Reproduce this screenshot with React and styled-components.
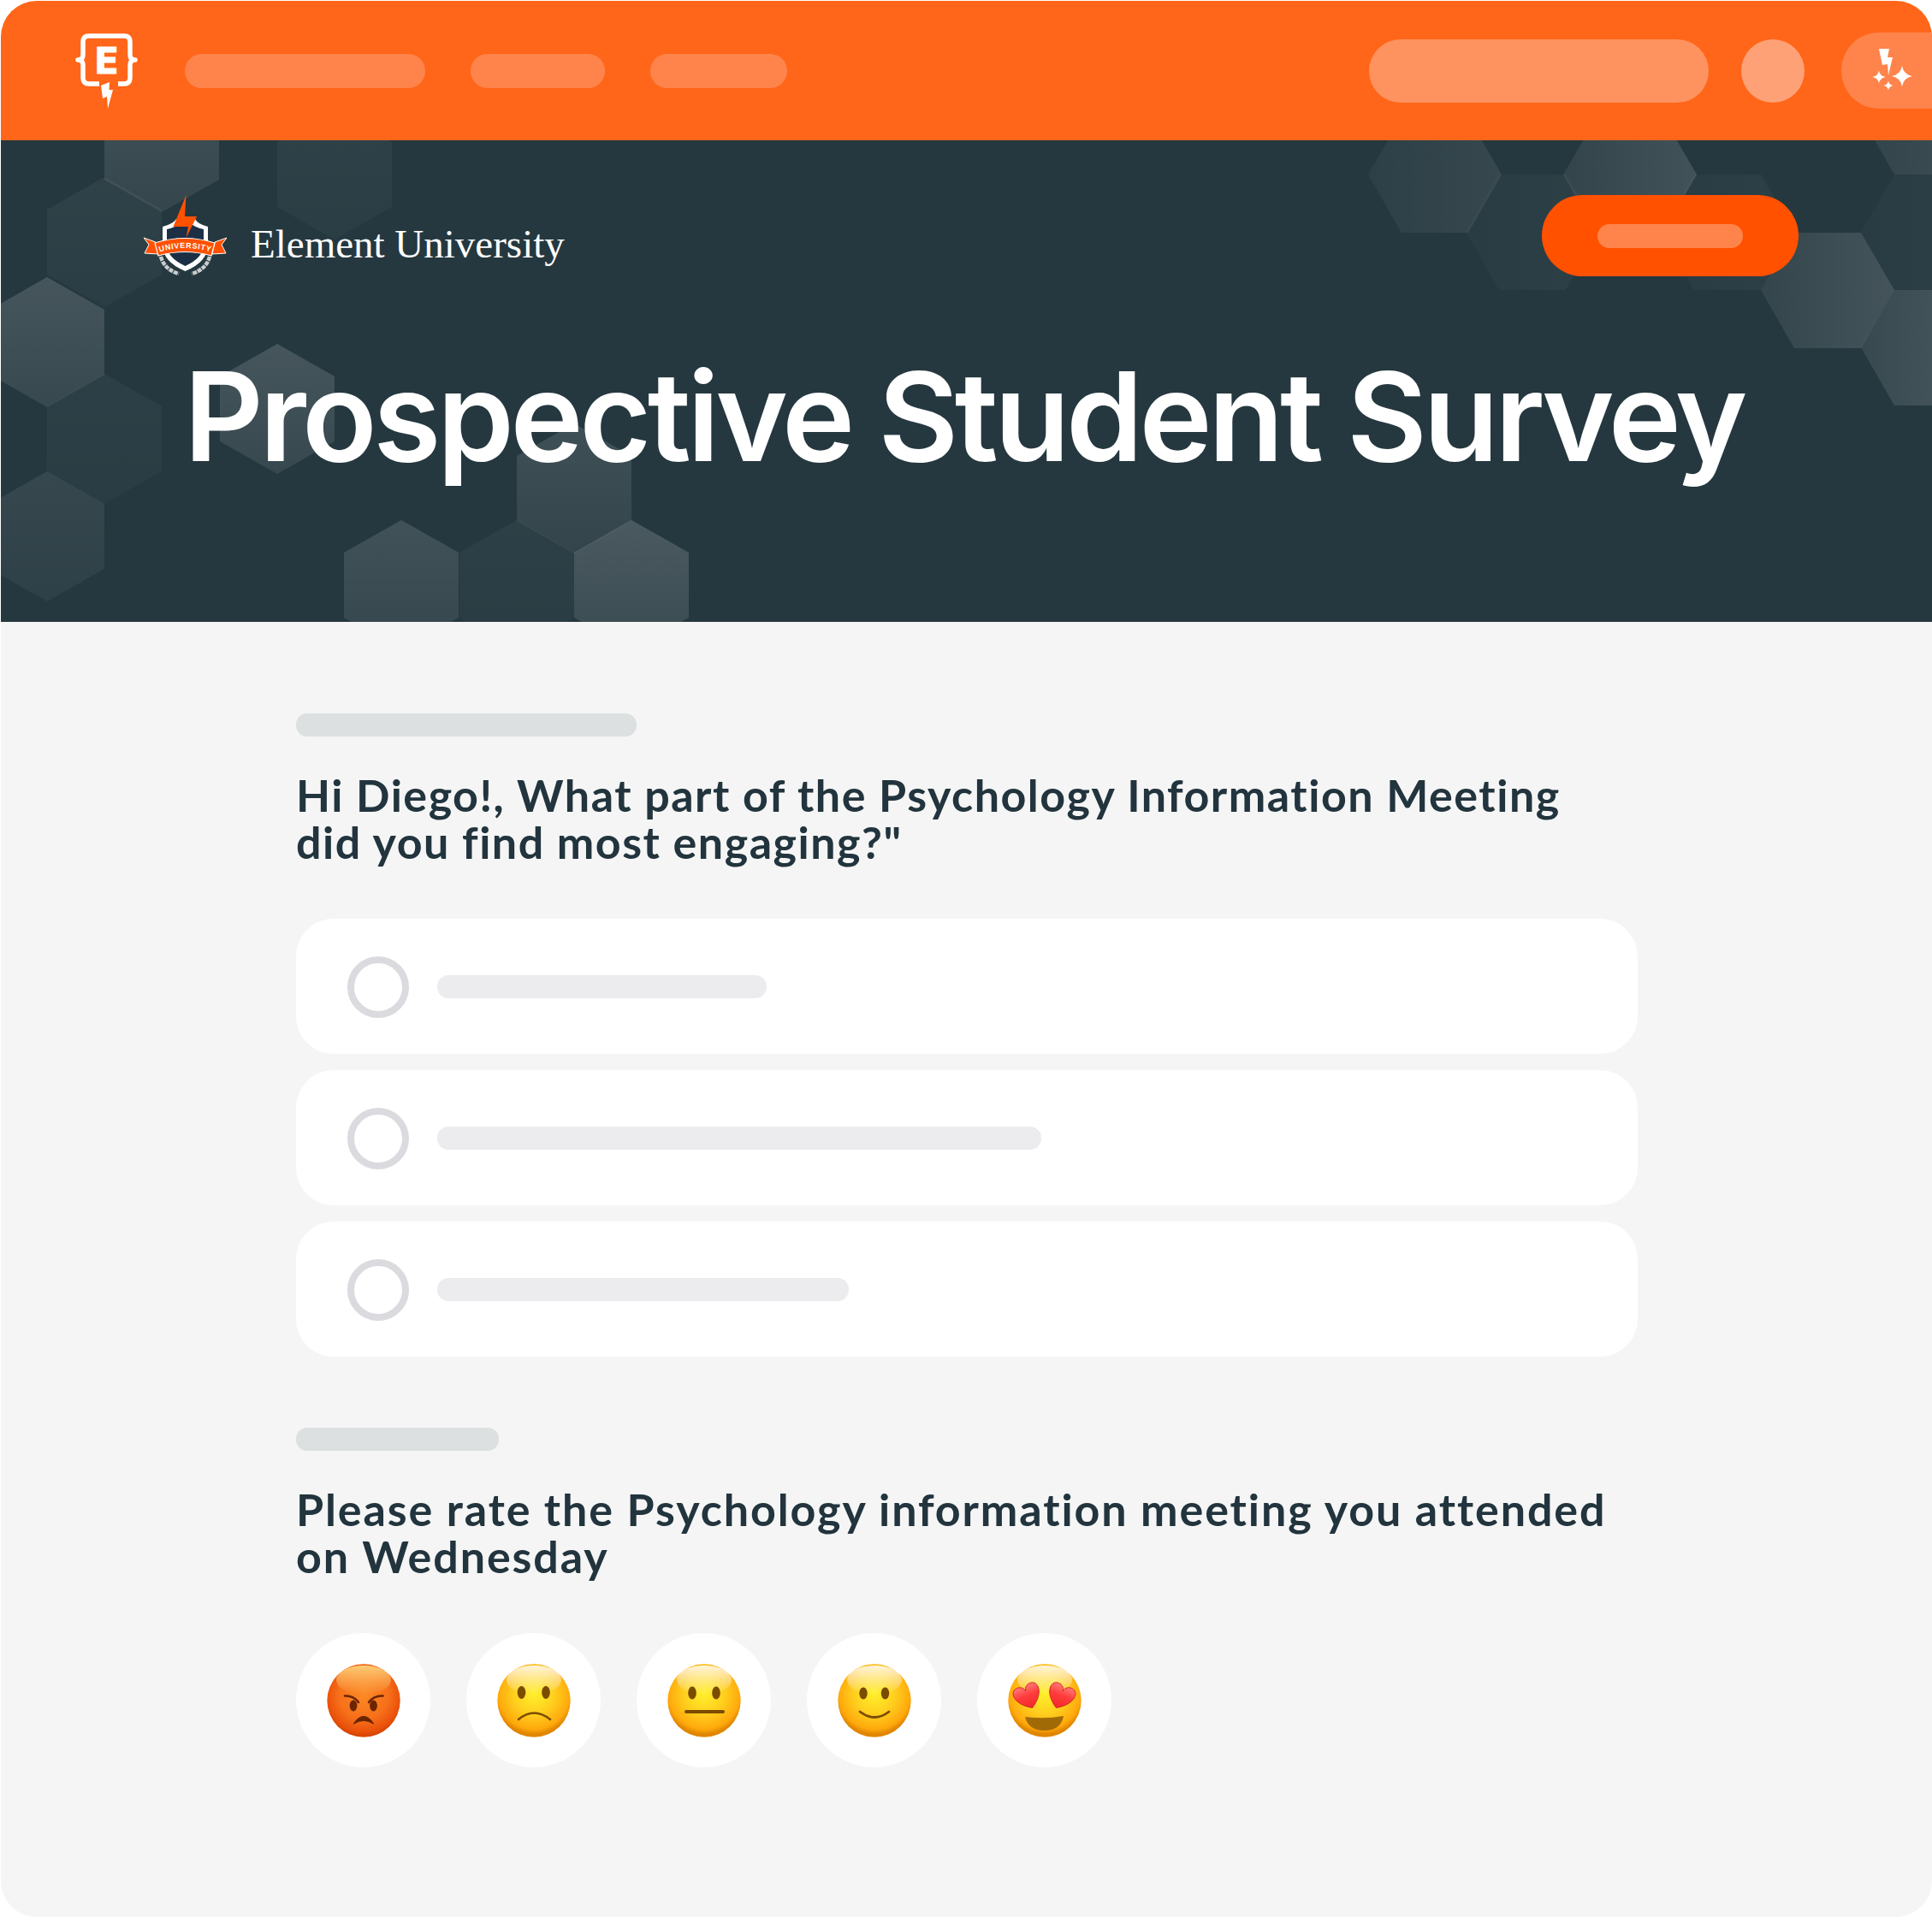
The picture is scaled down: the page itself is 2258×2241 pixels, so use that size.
import styled, { createGlobalStyle } from 'styled-components';

const GlobalStyle = createGlobalStyle`
    html, body {
        margin: 0;
        padding: 0;
        background: #ffffff;
    }
    body {
        font-family: 'Inter', 'Liberation Sans', sans-serif;
    }
`;

const Frame = styled.div`
    width: 2257px;
    height: 2240px;
    margin: 1px 0 0 1px;
    border-radius: 42px;
    overflow: hidden;
    background: #f5f5f5;
`;

const TopBar = styled.header`
    display: flex;
    align-items: center;
    height: 163px;
    padding-left: 87px;
    background: #ff6619;
`;

const TopLeft = styled.div`
    display: flex;
    align-items: center;
    gap: 53px;
    margin-left: 55px;
`;

const TopRight = styled.div`
    display: flex;
    align-items: center;
    margin-left: auto;
`;

const NavPill = styled.div`
    width: ${(p) => p.$w}px;
    height: 40px;
    border-radius: 20px;
    background: #ff844c;
`;

const SearchPill = styled.div`
    width: 397px;
    height: 74px;
    border-radius: 37px;
    background: #ff935f;
`;

const Avatar = styled.div`
    width: 74px;
    height: 74px;
    margin-left: 38px;
    border-radius: 50%;
    background: #ffa177;
`;

const AssistPill = styled.div`
    display: flex;
    align-items: center;
    width: 106px;
    height: 89px;
    margin-left: 43px;
    padding-left: 36px;
    box-sizing: border-box;
    border-radius: 44px 0 0 44px;
    background: #ff844c;
`;

const Hero = styled.section`
    position: relative;
    height: 563px;
    overflow: hidden;
    background: #25383f;
`;

const HexLayer = styled.svg`
    position: absolute;
    inset: 0;
    width: 100%;
    height: 100%;
`;

const HeroRow = styled.div`
    position: relative;
    display: flex;
    justify-content: space-between;
    padding: 64px 156px 0 167px;
`;

const Brand = styled.div`
    display: flex;
    align-items: center;
    gap: 28px;
    height: 94px;
`;

const BrandName = styled.span`
    font-family: 'Liberation Serif', 'Times New Roman', serif;
    font-size: 47px;
    color: #ffffff;
    padding-top: 20px;
`;

const HeroButton = styled.div`
    display: flex;
    align-items: center;
    justify-content: center;
    width: 300px;
    height: 95px;
    border-radius: 48px;
    background: #ff5100;
`;

const HeroButtonLabel = styled.div`
    width: 170px;
    height: 28px;
    border-radius: 14px;
    background: #ff844c;
`;

const HeroTitle = styled.h1`
    position: relative;
    margin: 92px 0 0 214px;
    font-size: 144px;
    line-height: 144px;
    font-weight: 600;
    letter-spacing: -4.4px;
    color: #ffffff;
    white-space: nowrap;
`;

const Content = styled.main`
    padding: 107px 0 0 345px;
    width: 1568px;
`;

const SkeletonLabel = styled.div`
    width: ${(p) => p.$w}px;
    height: 27px;
    border-radius: 13px;
    background: #dde0e0;
`;

const Question = styled.h2`
    margin: 41px 0 62px;
    font-family: 'Lato', 'Open Sans', sans-serif;
    font-size: 52px;
    line-height: 55px;
    font-weight: 700;
    letter-spacing: ${(p) => p.$spacing}px;
    color: #22343d;
    white-space: nowrap;
`;

const Options = styled.div`
    display: flex;
    flex-direction: column;
    gap: 19px;
    margin-bottom: 83px;
`;

const OptionCard = styled.div`
    display: flex;
    align-items: center;
    gap: 33px;
    height: 158px;
    padding-left: 60px;
    border-radius: 44px;
    background: #ffffff;
`;

const Radio = styled.div`
    width: 72px;
    height: 72px;
    margin-top: 2px;
    box-sizing: border-box;
    border: 8px solid #dadadf;
    border-radius: 50%;
`;

const OptionBar = styled.div`
    width: ${(p) => p.$w}px;
    height: 27px;
    border-radius: 13px;
    background: #ececee;
`;

const Ratings = styled.div`
    display: flex;
    gap: 42px;
`;

const RatingButton = styled.div`
    display: flex;
    align-items: center;
    justify-content: center;
    width: 157px;
    height: 157px;
    border-radius: 50%;
    background: #ffffff;
`;

const hexLeft = [
    { cx: 189, top: 96, a: 0.13 },
    { cx: 391, top: 128, a: 0.05 },
    { cx: 122, top: 207, a: 0.05 },
    { cx: 55, top: 324, a: 0.15 },
    { cx: 122, top: 437, a: 0.04 },
    { cx: 55, top: 551, a: 0.08 },
    { cx: 324, top: 402, a: 0.15 },
    { cx: 671, top: 495, a: 0.12 },
    { cx: 469, top: 608, a: 0.13 },
    { cx: 604, top: 608, a: 0.04 },
    { cx: 738, top: 608, a: 0.17 },
];

const hexRight = [
    { cx: 1677, cy: 204, a: 0.08 },
    { cx: 1791, cy: 271, a: 0.04 },
    { cx: 1905, cy: 204, a: 0.13 },
    { cx: 2019, cy: 271, a: 0.04 },
    { cx: 2136, cy: 339, a: 0.14 },
    { cx: 2253, cy: 136, a: 0.12 },
    { cx: 2253, cy: 271, a: 0.04 },
    { cx: 2253, cy: 406, a: 0.17 },
];

// pointy top, 134 wide and 152 tall
const pointyHex = (cx, top) =>
    [
        [cx, top],
        [cx + 67, top + 38],
        [cx + 67, top + 114],
        [cx, top + 152],
        [cx - 67, top + 114],
        [cx - 67, top + 38],
    ].join(' ');

// flat top, 156 wide and 135 tall
const flatHex = (cx, cy) =>
    [
        [cx - 78, cy],
        [cx - 39, cy - 67],
        [cx + 39, cy - 67],
        [cx + 78, cy],
        [cx + 39, cy + 68],
        [cx - 39, cy + 68],
    ].join(' ');

function HexBackground() {
    return (
        <HexLayer viewBox="1 164 2257 563" preserveAspectRatio="none">
            <defs>
                <linearGradient id="hexDown" x1="0" y1="0" x2="0" y2="1">
                    <stop offset="0" stopColor="#fff" stopOpacity="1" />
                    <stop offset="1" stopColor="#fff" stopOpacity="0.55" />
                </linearGradient>
                <linearGradient id="hexAcross" x1="0" y1="0" x2="1" y2="0">
                    <stop offset="0" stopColor="#fff" stopOpacity="0.5" />
                    <stop offset="1" stopColor="#fff" stopOpacity="1" />
                </linearGradient>
            </defs>
            {hexLeft.map((h) => (
                <polygon key={`${h.cx}-${h.top}`} points={pointyHex(h.cx, h.top)} fill="url(#hexDown)" opacity={h.a} />
            ))}
            {hexRight.map((h) => (
                <polygon key={`${h.cx}-${h.cy}`} points={flatHex(h.cx, h.cy)} fill="url(#hexAcross)" opacity={h.a} />
            ))}
        </HexLayer>
    );
}

function ElementLogo() {
    return (
        <svg width="73" height="89" viewBox="0 0 73 89">
            <path
                d="M28 60H16Q9 60 9 53V38Q9 32 3 32Q9 32 9 26V11Q9 4 16 4H57Q64 4 64 11V26Q64 32 70 32Q64 32 64 38V53Q64 60 57 60H50"
                fill="none"
                stroke="#fff"
                strokeWidth="5.5"
                strokeLinejoin="round"
            />
            <polygon points="30,62 40,58 39.5,67 44,67 38,89 37,75 32,77" fill="#fff" />
            <text
                x="36.5"
                y="47.5"
                textAnchor="middle"
                fontFamily="Inter"
                fontWeight="800"
                fontSize="43"
                fill="#fff"
                stroke="#fff"
                strokeWidth="1"
            >
                E
            </text>
        </svg>
    );
}

const star = (cx, cy, r) =>
    `M${cx} ${cy - r}Q${cx + r * 0.15} ${cy - r * 0.15} ${cx + r} ${cy}Q${cx + r * 0.15} ${cy + r * 0.15} ${cx} ${cy + r}Q${cx - r * 0.15} ${cy + r * 0.15} ${cx - r} ${cy}Q${cx - r * 0.15} ${cy - r * 0.15} ${cx} ${cy - r}Z`;

function AssistIcon() {
    return (
        <svg width="50" height="52" viewBox="0 0 50 52">
            <polygon points="8,0 20,0 18,10 24,10 19,31 18,18 12,19" fill="#fff" />
            <path d={star(35, 32, 12)} fill="#fff" />
            <path d={star(8, 33, 7.5)} fill="#fff" />
            <path d={star(19, 43, 5.5)} fill="#fff" />
        </svg>
    );
}

function UniversityCrest() {
    return (
        <svg width="97" height="94" viewBox="0 0 97 94">
            <defs>
                <path id="ribbonArc" d="M17 67Q48 57 80 67" fill="none" />
            </defs>
            <g fill="none" stroke="#c9cdcf" strokeWidth="4.5" strokeDasharray="5 1">
                <path d="M20 72Q24 87 41 92" />
                <path d="M77 72Q73 87 56 92" />
            </g>
            <path d="M22 37Q34 34 38 28H60Q63 34 75 37V58Q75 78 48.5 89Q22 78 22 58Z" fill="#fff" />
            <path d="M27 40Q36 38 41 34H56Q61 38 70 40V58Q70 73 48.5 83Q27 73 27 58Z" fill="#1c2f45" />
            <polygon points="49.5,0 48,25 62,25 49.5,50 52,37 34.5,37" fill="#ff5100" />
            <polygon points="0,50 14,55 17,69 1,68 6,58" fill="#ff5100" stroke="#fff" strokeWidth="1" />
            <polygon points="97,50 83,55 80,69 96,68 91,58" fill="#ff5100" stroke="#fff" strokeWidth="1" />
            <path d="M13 56Q48 45 83 56L79 71Q48 62 17 71Z" fill="#ff5100" stroke="#fff" strokeWidth="1.2" />
            <text fontFamily="Liberation Sans" fontWeight="700" fontSize="9" fill="#fff" letterSpacing="0.7">
                <textPath href="#ribbonArc" startOffset="50%" textAnchor="middle">
                    UNIVERSITY
                </textPath>
            </text>
        </svg>
    );
}

function Emoji({ kind }) {
    const angry = kind === 'angry';
    const ink = angry ? '#6b2500' : '#7a4c00';
    return (
        <svg width="86" height="86" viewBox="0 0 86 86">
            <defs>
                <radialGradient id={`face-${kind}`} cx="50%" cy={angry ? '42%' : '40%'} r="56%">
                    {angry ? (
                        <>
                            <stop offset="0" stopColor="#fb8a26" />
                            <stop offset="0.6" stopColor="#f7701a" />
                            <stop offset="0.9" stopColor="#ea520b" />
                            <stop offset="1" stopColor="#d94500" />
                        </>
                    ) : (
                        <>
                            <stop offset="0" stopColor="#fff02c" />
                            <stop offset="0.5" stopColor="#ffcf1e" />
                            <stop offset="0.88" stopColor="#ffa90c" />
                            <stop offset="1" stopColor="#e08600" />
                        </>
                    )}
                </radialGradient>
                <linearGradient id={`shine-${kind}`} x1="0" y1="0" x2="0" y2="1">
                    <stop offset="0" stopColor={angry ? '#ffd27a' : '#ffffff'} stopOpacity={angry ? '0.95' : '0.85'} />
                    <stop offset="1" stopColor={angry ? '#ffd27a' : '#ffffff'} stopOpacity="0" />
                </linearGradient>
                <linearGradient id={`heart-${kind}`} x1="0" y1="0" x2="0" y2="1">
                    <stop offset="0" stopColor="#ff7a7a" />
                    <stop offset="0.45" stopColor="#ff3b3b" />
                    <stop offset="1" stopColor="#f02a2a" />
                </linearGradient>
            </defs>
            <circle cx="43" cy="43" r="42.7" fill={`url(#face-${kind})`} />
            <ellipse cx="43" cy="19" rx="32" ry="17" fill={`url(#shine-${kind})`} />
            {kind === 'angry' && (
                <>
                    <ellipse cx="31" cy="49" rx="4.4" ry="6.5" fill={ink} />
                    <ellipse cx="54.5" cy="49" rx="4.4" ry="6.5" fill={ink} />
                    <path d="M21 37.5Q31 37 37 45" fill="none" stroke={ink} strokeWidth="2.6" strokeLinecap="round" />
                    <path d="M65.5 37.5Q55 37 49 45" fill="none" stroke={ink} strokeWidth="2.6" strokeLinecap="round" />
                    <path d="M31.5 70Q37 61.5 43 61.5Q49 61.5 54.5 70Q43 63 31.5 70Z" fill={ink} stroke={ink} strokeWidth="1.2" strokeLinejoin="round" />
                </>
            )}
            {kind === 'sad' && (
                <>
                    <ellipse cx="28.5" cy="33.5" rx="4.8" ry="7.5" fill={ink} />
                    <ellipse cx="57" cy="33.5" rx="4.8" ry="7.5" fill={ink} />
                    <path d="M25 65Q43 50 62 65" fill="none" stroke={ink} strokeWidth="2.6" strokeLinecap="round" />
                </>
            )}
            {kind === 'neutral' && (
                <>
                    <ellipse cx="29" cy="34" rx="4.8" ry="7.5" fill={ink} />
                    <ellipse cx="57" cy="34" rx="4.8" ry="7.5" fill={ink} />
                    <path d="M22 56H65" fill="none" stroke={ink} strokeWidth="4" strokeLinecap="round" />
                </>
            )}
            {kind === 'smile' && (
                <>
                    <ellipse cx="30" cy="34.5" rx="4.7" ry="7" fill={ink} />
                    <ellipse cx="55.5" cy="34.5" rx="4.7" ry="7" fill={ink} />
                    <path d="M26 56Q43 69 60 56" fill="none" stroke={ink} strokeWidth="2.8" strokeLinecap="round" />
                </>
            )}
            {kind === 'love' && (
                <>
                    <path d="M20 62Q43 65 65 61Q62 78 42.5 78Q24 78 20 62Z" fill="#a06a06" />
                    {['translate(23 37.5) rotate(-22)', 'translate(62 37.5) rotate(22)'].map((t) => (
                        <path
                            key={t}
                            transform={t}
                            d="M0 15C-20 3-18-13-8-13C-3-13 0-9 0-6C0-9 3-13 8-13C18-13 20 3 0 15Z"
                            fill={`url(#heart-${kind})`}
                            stroke="#c81e1e"
                            strokeWidth="0.8"
                        />
                    ))}
                </>
            )}
        </svg>
    );
}

export default function App() {
    return (
        <>
            <GlobalStyle />
            <Frame>
                <TopBar>
                    <ElementLogo />
                    <TopLeft>
                        <NavPill $w={281} />
                        <NavPill $w={157} />
                        <NavPill $w={160} />
                    </TopLeft>
                    <TopRight>
                        <SearchPill />
                        <Avatar />
                        <AssistPill>
                            <AssistIcon />
                        </AssistPill>
                    </TopRight>
                </TopBar>
                <Hero>
                    <HexBackground />
                    <HeroRow>
                        <Brand>
                            <UniversityCrest />
                            <BrandName>Element University</BrandName>
                        </Brand>
                        <HeroButton>
                            <HeroButtonLabel />
                        </HeroButton>
                    </HeroRow>
                    <HeroTitle>Prospective Student Survey</HeroTitle>
                </Hero>
                <Content>
                    <SkeletonLabel $w={398} />
                    <Question $spacing={1.5}>
                        Hi Diego!, What part of the Psychology Information Meeting
                        <br />
                        did you find most engaging?"
                    </Question>
                    <Options>
                        {[385, 706, 481].map((w) => (
                            <OptionCard key={w}>
                                <Radio />
                                <OptionBar $w={w} />
                            </OptionCard>
                        ))}
                    </Options>
                    <SkeletonLabel $w={237} />
                    <Question $spacing={1.9}>
                        Please rate the Psychology information meeting you attended
                        <br />
                        on Wednesday
                    </Question>
                    <Ratings>
                        {['angry', 'sad', 'neutral', 'smile', 'love'].map((kind) => (
                            <RatingButton key={kind}>
                                <Emoji kind={kind} />
                            </RatingButton>
                        ))}
                    </Ratings>
                </Content>
            </Frame>
        </>
    );
}
